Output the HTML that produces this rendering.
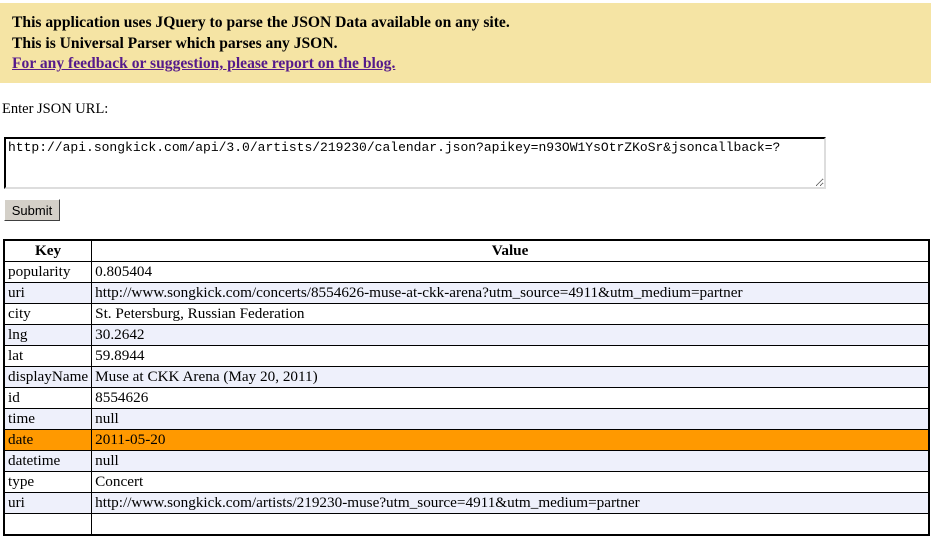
<!DOCTYPE html>
<html><head><meta charset="utf-8"><style>
body{margin:0;background:#fff;font-family:"Liberation Serif",serif;font-size:13px;color:#000;width:931px;height:516px;overflow:hidden;position:relative}
.box{position:absolute;left:0;top:3px;width:931px;height:80px;background:#f5e4a4}
.box div{position:absolute;left:12px;font-weight:bold;font-size:15.6px;white-space:nowrap}
.box a{color:#551a8b;text-decoration:underline}
.lbl{position:absolute;left:2px;top:101px;font-size:14.5px}
textarea{position:absolute;left:4px;top:137px;width:814px;height:46px;border:2px inset #999;border-color:#555 #ddd #ddd #555;font-family:"Liberation Mono",monospace;font-size:13px;padding:1px 2px;resize:both;margin:0;overflow:hidden}
.btn{position:absolute;left:4px;top:199px;width:56px;height:22px;background:#d4d0c8;border:1px solid;border-color:#fff #404040 #404040 #fff;font-family:"Liberation Sans",sans-serif;font-size:13px;text-align:center;line-height:21px;box-sizing:border-box}
table{position:absolute;left:3px;top:239px;width:927px;border-collapse:collapse;border:2px solid #000;font-size:15.2px}
td,th{border:1px solid #000;height:20px;padding:0 3px;line-height:20px;white-space:nowrap;overflow:hidden}
th{font-weight:bold}
td:first-child,th:first-child{width:80px}
tr.b td{background:#eef0fb}
tr.o td{background:#ff9900}
</style></head><body>
<div class="box">
<div style="top:11px">This application uses JQuery to parse the JSON Data available on any site.</div>
<div style="top:32px">This is Universal Parser which parses any JSON.</div>
<div style="top:52px"><a>For any feedback or suggestion, please report on the blog.</a></div>
</div>
<div class="lbl">Enter JSON URL:</div>
<textarea>http://api.songkick.com/api/3.0/artists/219230/calendar.json?apikey=n93OW1YsOtrZKoSr&amp;jsoncallback=?</textarea>
<div class="btn">Submit</div>
<table>
<tr><th>Key</th><th>Value</th></tr>
<tr><td>popularity</td><td>0.805404</td></tr>
<tr class="b"><td>uri</td><td>http://www.songkick.com/concerts/8554626-muse-at-ckk-arena?utm_source=4911&amp;utm_medium=partner</td></tr>
<tr><td>city</td><td>St. Petersburg, Russian Federation</td></tr>
<tr class="b"><td>lng</td><td>30.2642</td></tr>
<tr><td>lat</td><td>59.8944</td></tr>
<tr class="b"><td>displayName</td><td>Muse at CKK Arena (May 20, 2011)</td></tr>
<tr><td>id</td><td>8554626</td></tr>
<tr class="b"><td>time</td><td>null</td></tr>
<tr class="o"><td>date</td><td>2011-05-20</td></tr>
<tr class="b"><td>datetime</td><td>null</td></tr>
<tr><td>type</td><td>Concert</td></tr>
<tr class="b"><td>uri</td><td>http://www.songkick.com/artists/219230-muse?utm_source=4911&amp;utm_medium=partner</td></tr>
<tr><td>&nbsp;</td><td>&nbsp;</td></tr>
</table>
</body></html>
